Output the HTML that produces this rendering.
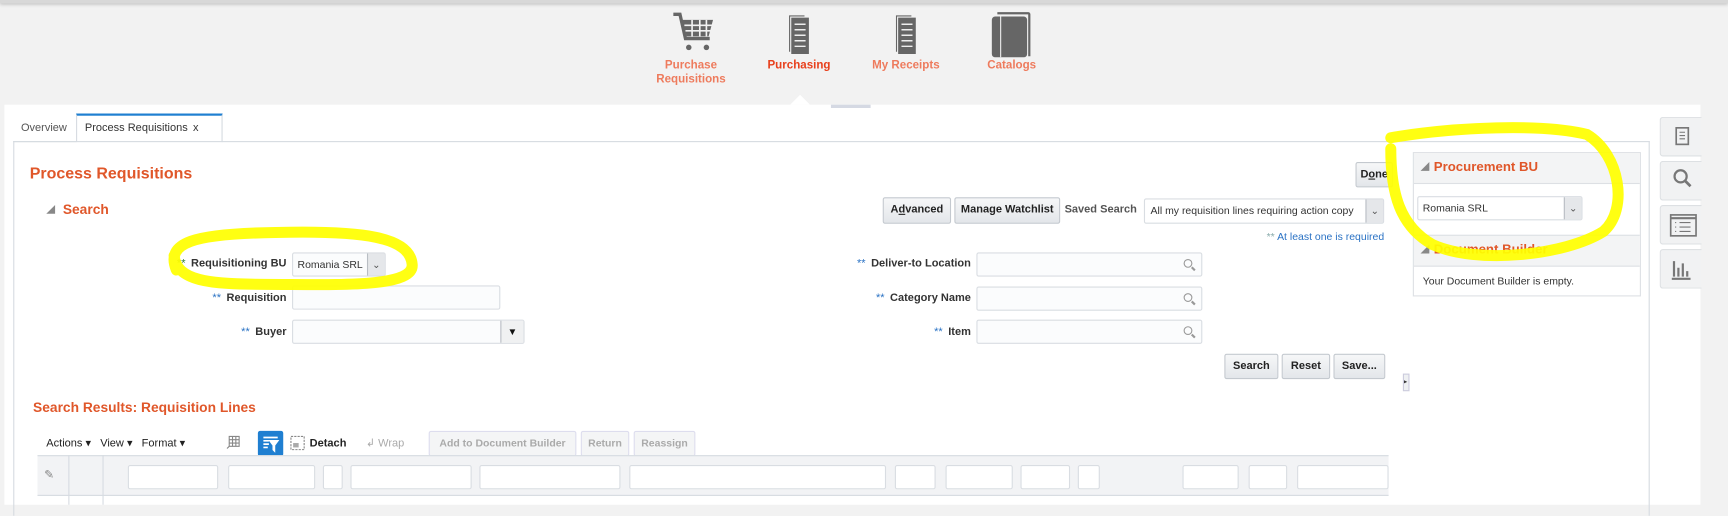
<!DOCTYPE html>
<html><head><meta charset="utf-8">
<style>
html,body{margin:0;padding:0;width:1728px;height:505px;overflow:hidden;background:#f2f2f2;}
#w{position:absolute;left:0;top:0;width:1568px;height:458px;transform:scale(1.10204);transform-origin:0 0;font-family:"Liberation Sans",Arial,sans-serif;font-size:10.5px;color:#333;}
.a{position:absolute;white-space:nowrap;}
.or{color:#e0572a;font-weight:bold;}
.nav{color:#ee7b5d;font-size:10.5px;font-weight:bold;text-align:center;line-height:13px;}
.inp{position:absolute;background:#fbfcfd;border:1px solid #d9dde2;box-sizing:border-box;border-radius:2px;}
.btn{position:absolute;white-space:nowrap;background:linear-gradient(#f6f7f8,#e3e6ea);border:1px solid #c4c9cf;box-sizing:border-box;border-radius:2px;font-weight:bold;font-size:10px;color:#222;text-align:center;}
.lbl{position:absolute;white-space:nowrap;text-align:right;font-size:10px;color:#333;font-weight:bold;}
.st{color:#2a72c4;margin-right:5px;font-weight:normal;font-size:10px;}
.dd{position:absolute;right:0;top:0;bottom:0;width:15px;background:#e5e7ea;border-left:1px solid #b9bec4;font-size:9px;text-align:center;color:#555;}
.mag{position:absolute;right:8px;top:5px;width:6px;height:6px;border:1.5px solid #999;border-radius:50%;}
.mag:after{content:"";position:absolute;left:6px;top:7px;width:4px;height:1.5px;background:#999;transform:rotate(45deg);}
.tab{position:absolute;left:1506px;width:38px;height:36px;background:#f1f2f3;border:1px solid #dde0e3;border-right:none;border-radius:3px 0 0 3px;box-sizing:border-box;}
</style></head><body><div id="w">
<div class="a" style="left:0;top:0;width:1568px;height:3px;background:#d8d8d8;box-shadow:0 1px 3px #bbb"></div>
<svg class="a" style="left:610px;top:10px" width="40" height="40" viewBox="0 0 40 40"><path d="M1 3h6l5 22h22" fill="none" stroke="#666" stroke-width="3"/><path d="M9 8h28l-4 15H13z" fill="#666"/><g stroke="#f2f2f2" stroke-width="1.5"><path d="M11 13h26M12 18h24M18 8v15M25 8v15M31 8v15"/></g><circle cx="15" cy="33" r="2.5" fill="#666"/><circle cx="31" cy="33" r="2.5" fill="#666"/></svg>
<svg class="a" style="left:714px;top:12px" width="24" height="40" viewBox="0 0 24 40"><path d="M2 2h14v1H3v32H2z" fill="#666"/><rect x="4" y="4" width="16" height="33" fill="#666"/><g stroke="#eee" stroke-width="1.3"><path d="M7 10h10M7 15h10M7 20h10M7 25h10M7 30h10"/></g></svg>
<svg class="a" style="left:811px;top:12px" width="24" height="40" viewBox="0 0 24 40"><path d="M2 2h14v1H3v32H2z" fill="#666"/><rect x="4" y="4" width="16" height="33" fill="#666"/><g stroke="#eee" stroke-width="1.3"><path d="M7 10h10M7 15h10M7 20h10M7 25h10M7 30h10"/></g></svg>
<svg class="a" style="left:899px;top:10px" width="38" height="44" viewBox="0 0 38 44"><path d="M6 1h28a2 2 0 0 1 2 2v38h-2V3H6z" fill="#666"/><rect x="1" y="5" width="32" height="37" rx="3" fill="#666"/><path d="M9 5v37" stroke="#eee" stroke-width="1"/></svg>
<div class="a nav" style="left:590px;top:53px;width:74px">Purchase<br>Requisitions</div>
<div class="a nav" style="left:690px;top:53px;width:70px;color:#e8401c">Purchasing</div>
<div class="a nav" style="left:786px;top:53px;width:72px">My Receipts</div>
<div class="a nav" style="left:890px;top:53px;width:56px">Catalogs</div>
<div class="a" style="left:4px;top:95px;width:1539px;height:363px;background:#fff"></div>
<div class="a" style="left:717px;top:86px;width:0;height:0;border-left:9px solid transparent;border-right:9px solid transparent;border-bottom:9px solid #fff"></div>
<div class="a" style="left:754px;top:95px;width:36px;height:3px;background:#d5d9e3"></div>
<div class="a" style="left:19px;top:111px;color:#555;font-size:10px">Overview</div>
<div class="a" style="left:69px;top:103px;width:133px;height:26px;border:1px solid #d6dbe1;border-top:2px solid #1f7fd1;border-bottom:none;background:#fff;box-sizing:border-box"></div>
<div class="a" style="left:77px;top:111px;font-size:10px;color:#333">Process Requisitions <span style="font-size:10px;margin-left:2px">x</span></div>
<div class="a" style="left:12px;top:128px;width:1485px;height:340px;border:1px solid #d6dbe1;border-bottom:none;box-sizing:border-box"></div>
<div class="a" style="left:12px;top:128px;width:57px;height:1px;background:#d6dbe1"></div>
<div class="a or" style="left:27px;top:150px;font-size:14.5px">Process Requisitions</div>
<div class="a" style="left:42px;top:186px;width:0;height:0;border-left:8px solid transparent;border-bottom:8px solid #888"></div>
<div class="a or" style="left:57px;top:183px;font-size:12.5px">Search</div>
<div class="lbl" style="left:100px;top:234px;width:160px"><span class="st" style="color:#2e7d32">**</span>Requisitioning BU</div>
<div class="inp" style="left:265px;top:229px;width:85px;height:22px"><span class="a" style="left:4px;top:5px;font-size:9.5px">Romania SRL</span><div class="dd" style="line-height:20px">&#8964;</div></div>
<div class="lbl" style="left:100px;top:265px;width:160px"><span class="st">**</span>Requisition</div>
<div class="inp" style="left:265px;top:259px;width:189px;height:22px"></div>
<div class="lbl" style="left:100px;top:296px;width:160px"><span class="st">**</span>Buyer</div>
<div class="inp" style="left:265px;top:290px;width:211px;height:22px"><div class="dd" style="width:20px;background:#f0f1f2;line-height:20px;font-size:9px;color:#111">&#9660;</div></div>
<div class="btn" style="left:801px;top:179px;width:62px;height:24px;line-height:22px">A<u>d</u>vanced</div>
<div class="btn" style="left:866px;top:179px;width:96px;height:24px;line-height:22px">Manage Watchlist</div>
<div class="a" style="left:966px;top:185px;font-weight:bold;color:#555;font-size:10px">Saved Search</div>
<div class="inp" style="left:1038px;top:180px;width:218px;height:23px;background:#fff"><span class="a" style="left:5px;top:5px;font-size:9.5px">All my requisition lines requiring action copy</span><div class="dd" style="line-height:21px">&#8964;</div></div>
<div class="a" style="left:1100px;top:210px;width:156px;text-align:right;color:#2a72c4;font-size:9.5px"><span style="color:#8aa">**</span> At least one is required</div>
<div class="lbl" style="left:700px;top:234px;width:181px"><span class="st">**</span>Deliver-to Location</div>
<div class="inp" style="left:886px;top:229px;width:205px;height:22px"><div class="mag"></div></div>
<div class="lbl" style="left:700px;top:265px;width:181px"><span class="st">**</span>Category Name</div>
<div class="inp" style="left:886px;top:260px;width:205px;height:22px"><div class="mag"></div></div>
<div class="lbl" style="left:700px;top:296px;width:181px"><span class="st">**</span>Item</div>
<div class="inp" style="left:886px;top:290px;width:205px;height:22px"><div class="mag"></div></div>
<div class="btn" style="left:1230px;top:147px;width:34px;height:23px;line-height:21px">D<u>o</u>ne</div>
<div class="btn" style="left:1111px;top:321px;width:49px;height:23px;line-height:21px">Search</div>
<div class="btn" style="left:1163px;top:321px;width:44px;height:23px;line-height:21px">Reset</div>
<div class="btn" style="left:1210px;top:321px;width:47px;height:23px;line-height:21px">Save...</div>
<div class="a" style="left:1273px;top:339px;width:6px;height:16px;background:#eef0f2;border:1px solid #ccd;box-sizing:border-box;font-size:6px;line-height:14px">&#9656;</div>
<div class="a" style="left:1282px;top:138px;width:207px;height:131px;border:1px solid #dde0e4;box-sizing:border-box;background:#fff"></div>
<div class="a" style="left:1283px;top:139px;width:205px;height:27px;background:#f3f4f5;border-bottom:1px solid #dde0e4"></div>
<div class="a" style="left:1289px;top:147px;border-left:8px solid transparent;border-bottom:8px solid #888"></div>
<div class="a or" style="left:1301px;top:144px;font-size:12px">Procurement BU</div>
<div class="inp" style="left:1286px;top:178px;width:150px;height:22px;background:#fff"><span class="a" style="left:4px;top:5px;font-size:9.5px">Romania SRL</span><div class="dd" style="line-height:20px">&#8964;</div></div>
<div class="a" style="left:1283px;top:213px;width:205px;height:27px;background:#f3f4f5;border-top:1px solid #dde0e4;border-bottom:1px solid #dde0e4"></div>
<div class="a" style="left:1289px;top:222px;border-left:8px solid transparent;border-bottom:8px solid #888"></div>
<div class="a or" style="left:1301px;top:219px;font-size:12px">Document Builder</div>
<div class="a" style="left:1291px;top:250px;font-size:9.5px">Your Document Builder is empty.</div>
<div class="tab" style="top:106px"><svg width="38" height="36"><rect x="14" y="9" width="11" height="15" fill="none" stroke="#777" stroke-width="1.5"/><path d="M17 13h5M17 16h5M17 19h5" stroke="#777"/></svg></div>
<div class="tab" style="top:146px"><svg width="38" height="36"><circle cx="18" cy="13" r="5.5" fill="none" stroke="#777" stroke-width="2"/><path d="M22 17l5 5" stroke="#777" stroke-width="2.5"/></svg></div>
<div class="tab" style="top:186px"><svg width="38" height="36"><rect x="9" y="8" width="23" height="19" fill="none" stroke="#777" stroke-width="1.5"/><path d="M9 11h23" stroke="#777" stroke-width="2"/><path d="M13 15h1M17 15h10M13 19h1M17 19h10M13 23h1M17 23h10" stroke="#777"/></svg></div>
<div class="tab" style="top:226px"><svg width="38" height="36"><path d="M12 10v14M16 16v8M20 12v12M24 19v5M10 26h17" stroke="#777" stroke-width="2"/></svg></div>
<div class="a or" style="left:30px;top:363px;font-size:12.5px">Search Results: Requisition Lines</div>
<div class="a" style="left:42px;top:397px;font-size:10px;color:#222">Actions &#9662;&nbsp;&nbsp; View &#9662;&nbsp;&nbsp; Format &#9662;</div>
<svg class="a" style="left:204px;top:394px" width="14" height="14"><path d="M4 2h9v9H4zM4 5h9M4 8h9M7 2v9M10 2v9M4 11l-2 2" stroke="#888" fill="none"/></svg>
<div class="a" style="left:234px;top:391px;width:23px;height:23px;background:#1f7fd1;border-radius:2px"><svg width="23" height="23"><path d="M5 6h13M5 9h5M5 12h5M5 15h4M11 9h7l-3 4v5l-1-1v-4z" stroke="#fff" stroke-width="1.5" fill="#fff"/></svg></div>
<svg class="a" style="left:263px;top:395px" width="14" height="14"><rect x="1" y="1" width="12" height="12" fill="none" stroke="#888" stroke-dasharray="2 1"/><rect x="3" y="7" width="5" height="4" fill="#aaa"/></svg>
<div class="a" style="left:281px;top:397px;font-weight:bold;color:#222;font-size:10px">Detach</div>
<div class="a" style="left:332px;top:397px;color:#aaa;font-size:10px">&#8626; Wrap</div>
<div class="btn" style="left:389px;top:391px;width:134px;height:23px;line-height:21px;color:#aaa;background:#f4f5f6;border-color:#dde;font-size:9.5px">Add to Document Builder</div>
<div class="btn" style="left:527px;top:391px;width:44px;height:23px;line-height:21px;color:#aaa;background:#f4f5f6;border-color:#dde;font-size:9.5px">Return</div>
<div class="btn" style="left:575px;top:391px;width:56px;height:23px;line-height:21px;color:#aaa;background:#f4f5f6;border-color:#dde;font-size:9.5px">Reassign</div>
<div class="a" style="left:34px;top:413px;width:1226px;height:35px;background:#f2f3f5;border-top:1px solid #d6dbe1;border-bottom:1px solid #d6dbe1"></div>
<div class="a" style="left:40px;top:424px;color:#888;font-size:11px">&#9998;</div>
<div class="a" style="left:62px;top:413px;width:1px;height:45px;background:#d6dbe1"></div>
<div class="a" style="left:93px;top:413px;width:1px;height:45px;background:#d6dbe1"></div>
<div class="inp" style="left:116px;top:422px;width:82px;height:22px;background:#fff"></div>
<div class="inp" style="left:207px;top:422px;width:79px;height:22px;background:#fff"></div>
<div class="inp" style="left:293px;top:422px;width:18px;height:22px;background:#fff"></div>
<div class="inp" style="left:318px;top:422px;width:110px;height:22px;background:#fff"></div>
<div class="inp" style="left:435px;top:422px;width:128px;height:22px;background:#fff"></div>
<div class="inp" style="left:571px;top:422px;width:233px;height:22px;background:#fff"></div>
<div class="inp" style="left:812px;top:422px;width:37px;height:22px;background:#fff"></div>
<div class="inp" style="left:858px;top:422px;width:61px;height:22px;background:#fff"></div>
<div class="inp" style="left:926px;top:422px;width:45px;height:22px;background:#fff"></div>
<div class="inp" style="left:978px;top:422px;width:20px;height:22px;background:#fff"></div>
<div class="inp" style="left:1073px;top:422px;width:51px;height:22px;background:#fff"></div>
<div class="inp" style="left:1133px;top:422px;width:35px;height:22px;background:#fff"></div>
<div class="inp" style="left:1177px;top:422px;width:83px;height:22px;background:#fff"></div>
<svg class="a" style="left:0;top:0" width="1568" height="458"><g fill="none" stroke="#ffff00" stroke-width="10" stroke-linecap="round" opacity="0.93">
<path d="M160 245 C150 220 175 212 250 211 C330 209 372 215 374 240 C376 262 300 258 240 258 C190 258 160 255 158 232"/>
<path d="M1262 135 C1262 175 1270 205 1300 222 C1340 240 1420 232 1455 210 C1478 190 1470 140 1440 122 C1400 112 1320 115 1262 125"/>
</g></svg>
</div></body></html>
